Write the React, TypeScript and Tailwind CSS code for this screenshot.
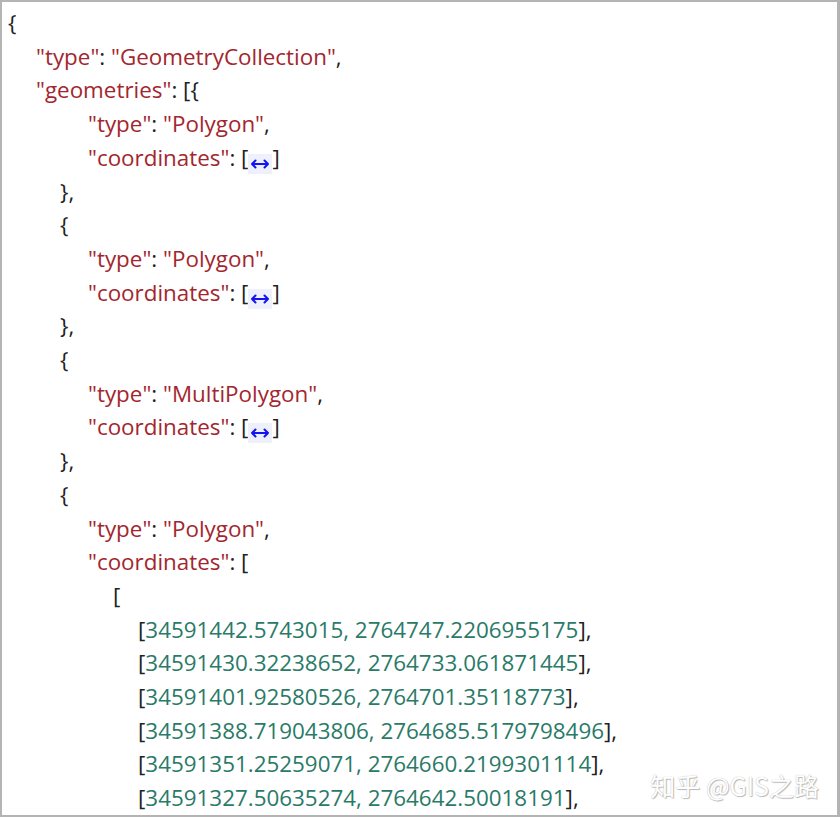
import React from 'react';

type Part = { t: string; c: 'k' | 'p' | 'n' | 'x' };

const K = (t: string): Part => ({ t, c: 'k' });
const P = (t: string): Part => ({ t, c: 'p' });
const N = (t: string): Part => ({ t, c: 'n' });
const X: Part = { t: '', c: 'x' };

const lines: { indent: number; parts: Part[] }[] = [
  { indent: 0, parts: [P('{')] },
  { indent: 1, parts: [K('"type"'), P(': '), K('"GeometryCollection"'), P(',')] },
  { indent: 1, parts: [K('"geometries"'), P(': [{')] },
  { indent: 3, parts: [K('"type"'), P(': '), K('"Polygon"'), P(',')] },
  { indent: 3, parts: [K('"coordinates"'), P(': ['), X, P(']')] },
  { indent: 2, parts: [P('},')] },
  { indent: 2, parts: [P('{')] },
  { indent: 3, parts: [K('"type"'), P(': '), K('"Polygon"'), P(',')] },
  { indent: 3, parts: [K('"coordinates"'), P(': ['), X, P(']')] },
  { indent: 2, parts: [P('},')] },
  { indent: 2, parts: [P('{')] },
  { indent: 3, parts: [K('"type"'), P(': '), K('"MultiPolygon"'), P(',')] },
  { indent: 3, parts: [K('"coordinates"'), P(': ['), X, P(']')] },
  { indent: 2, parts: [P('},')] },
  { indent: 2, parts: [P('{')] },
  { indent: 3, parts: [K('"type"'), P(': '), K('"Polygon"'), P(',')] },
  { indent: 3, parts: [K('"coordinates"'), P(': [')] },
  { indent: 4, parts: [P('[')] },
  { indent: 5, parts: [P('['), N('34591442.5743015, 2764747.2206955175'), P('],')] },
  { indent: 5, parts: [P('['), N('34591430.32238652, 2764733.061871445'), P('],')] },
  { indent: 5, parts: [P('['), N('34591401.92580526, 2764701.35118773'), P('],')] },
  { indent: 5, parts: [P('['), N('34591388.719043806, 2764685.5179798496'), P('],')] },
  { indent: 5, parts: [P('['), N('34591351.25259071, 2764660.2199301114'), P('],')] },
  { indent: 5, parts: [P('['), N('34591327.50635274, 2764642.50018191'), P('],')] },
];

const indents = ['pl-0', 'pl-[28px]', 'pl-[52px]', 'pl-[80px]', 'pl-[105px]', 'pl-[130px]'];

// collapsed-array marker: blue double arrow on a faint highlight
const Collapsed = () => (
  <span className="inline-flex items-center justify-center w-[24px] h-[20px] align-[-3px] bg-[#eef0fb]">
    <svg width="20" height="10" viewBox="0 0 20 10" fill="none" stroke="#1414f0" strokeWidth="2" strokeLinecap="round" strokeLinejoin="round">
      <path d="M2 5h16M5.5 1.5 2 5l3.5 3.5M14.5 1.5 18 5l-3.5 3.5" />
    </svg>
  </span>
);

const Token = ({ part }: { part: Part }) => {
  if (part.c === 'x') return <Collapsed />;
  const color = part.c === 'k' ? 'text-[#a3262e]' : part.c === 'n' ? 'text-[#2a7a68]' : 'text-[#222]';
  return <span className={`${color} whitespace-pre`}>{part.t}</span>;
};

export default function App() {
  return (
    <div className="relative w-[840px] h-[817px] bg-white border-2 border-r-[3px] border-[#b4b4b4] overflow-hidden font-['Open_Sans','Noto_Sans',sans-serif] text-[22.4px] leading-[33.7px]">
      <div className="pt-[4px] pl-[6px]">
        {lines.map((line, i) => (
          <div key={i} className={`${indents[line.indent]} whitespace-nowrap`}>
            {line.parts.map((p, j) => (
              <Token key={j} part={p} />
            ))}
          </div>
        ))}
      </div>

      {/* watermark */}
      <div className="absolute right-[18px] bottom-[17px] text-[25px] leading-none text-white font-['Noto_Sans_CJK_SC',sans-serif] [text-shadow:0_0_1px_#aaa,1px_1px_1px_#bbb]">
        知乎 @GIS之路
      </div>
    </div>
  );
}
